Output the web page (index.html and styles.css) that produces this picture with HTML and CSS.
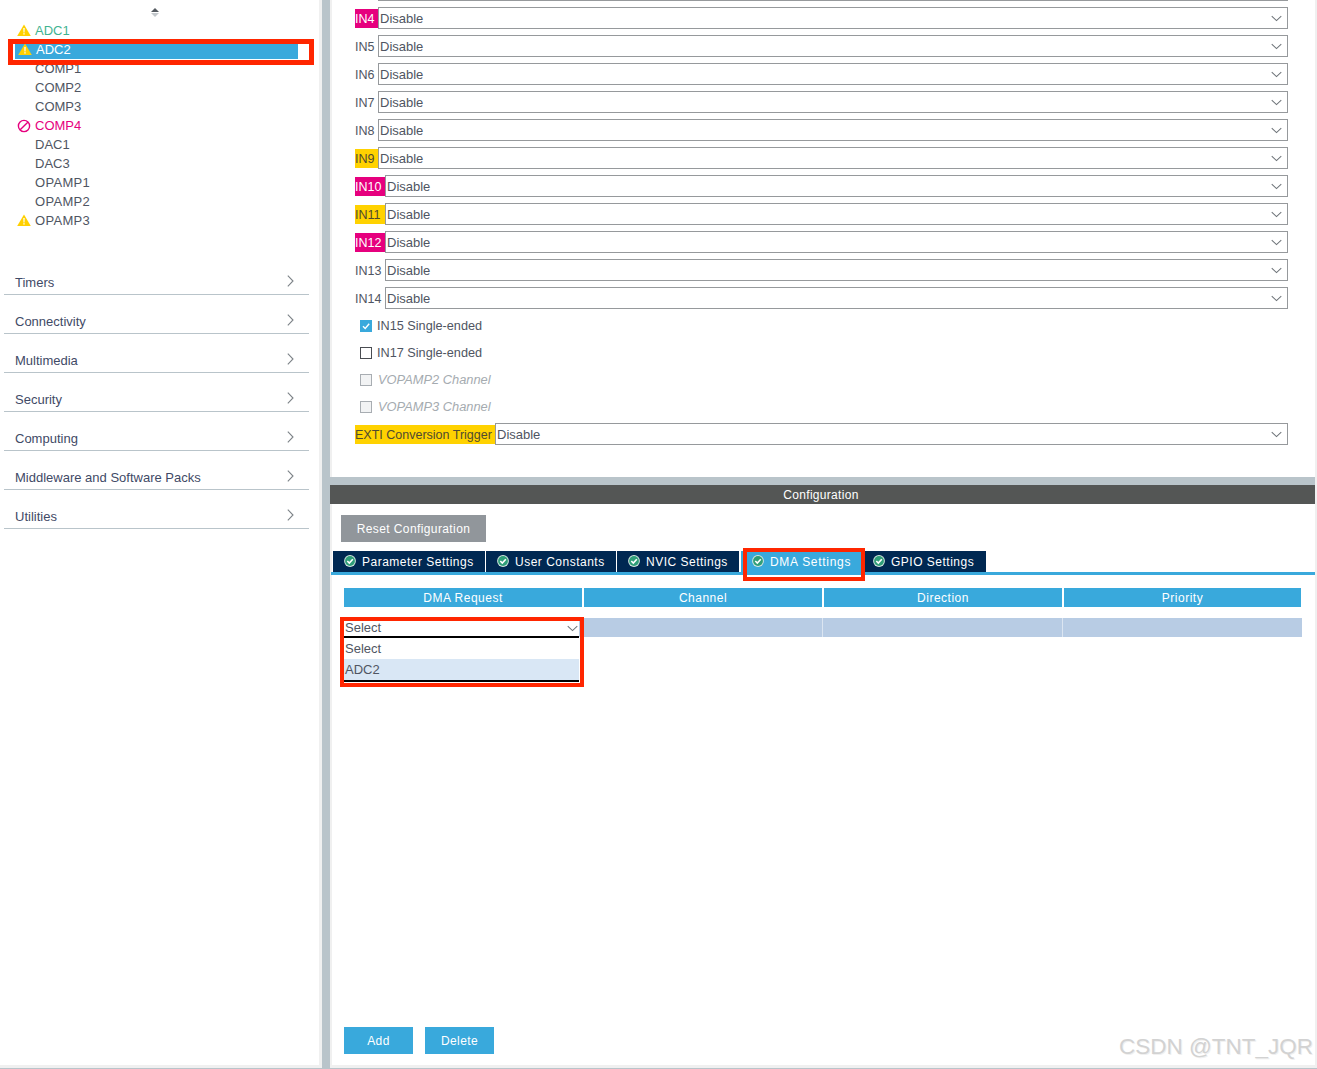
FILE: index.html
```html
<!DOCTYPE html>
<html lang="en">
<head>
<meta charset="utf-8">
<title>ADC2 DMA Settings</title>
<link rel="stylesheet" href="styles.css">
</head>
<body>
<svg class="defs" width="0" height="0" aria-hidden="true">
  <symbol id="warn" viewBox="0 0 14 12"><path d="M7 .5 13.8 12H.2Z" fill="#ffd000"/><path d="M6.3 4h1.4l-.2 4.4h-1zM6.3 9.2h1.4v1.3H6.3z" fill="#fff"/></symbol>
  <symbol id="ban" viewBox="0 0 14 14"><circle cx="7" cy="7" r="5.6" fill="none" stroke="#e6007e" stroke-width="1.4"/><path d="M3.2 10.8 10.8 3.2" stroke="#e6007e" stroke-width="1.4"/></symbol>
  <symbol id="ok" viewBox="0 0 12 12"><circle cx="6" cy="6" r="5.9" fill="#d5e8e0"/><circle cx="6" cy="6" r="4.9" fill="#2f9e78"/><path d="M3.3 6 5.3 8 8.8 4.2" fill="none" stroke="#fff" stroke-width="1.6"/></symbol>
  <symbol id="down" viewBox="0 0 12 7"><path d="M.8.8 6 5.8 11.2.8" fill="none" stroke="#6d7378" stroke-width="1.1"/></symbol>
  <symbol id="right" viewBox="0 0 7 12"><path d="M.8.6 6 6 .8 11.4" fill="none" stroke="#7d8388" stroke-width="1.1"/></symbol>
</svg>
<div class="app">
  <aside class="sidebar">
    <div class="sort"><span class="sort-up"></span><span class="sort-down"></span></div>
    <ul class="tree">
      <li class="item green"><svg class="ico"><use href="#warn"/></svg>ADC1</li>
      <li class="item selected"><span class="sel-bar"><svg class="ico"><use href="#warn"/></svg>ADC2</span></li>
      <li class="item">COMP1</li>
      <li class="item">COMP2</li>
      <li class="item">COMP3</li>
      <li class="item pink"><svg class="ico ico-ban"><use href="#ban"/></svg>COMP4</li>
      <li class="item">DAC1</li>
      <li class="item">DAC3</li>
      <li class="item wide">OPAMP1</li>
      <li class="item wide">OPAMP2</li>
      <li class="item wide"><svg class="ico"><use href="#warn"/></svg>OPAMP3</li>
    </ul>
    <nav class="accordion">
      <div class="acc">Timers<svg class="chev"><use href="#right"/></svg></div>
      <div class="acc">Connectivity<svg class="chev"><use href="#right"/></svg></div>
      <div class="acc">Multimedia<svg class="chev"><use href="#right"/></svg></div>
      <div class="acc">Security<svg class="chev"><use href="#right"/></svg></div>
      <div class="acc">Computing<svg class="chev"><use href="#right"/></svg></div>
      <div class="acc">Middleware and Software Packs<svg class="chev"><use href="#right"/></svg></div>
      <div class="acc">Utilities<svg class="chev"><use href="#right"/></svg></div>
    </nav>
    <div class="mark mark-adc"></div>
  </aside>
  <div class="splitter"></div>
  <main class="main">
    <section class="modes">
      <div class="row row-clipped"><span class="lab w1"></span><div class="sel"><svg class="caret"><use href="#down"/></svg></div></div>
      <div class="row"><span class="lab w1 bad">IN4</span><div class="sel">Disable<svg class="caret"><use href="#down"/></svg></div></div>
      <div class="row"><span class="lab w1">IN5</span><div class="sel">Disable<svg class="caret"><use href="#down"/></svg></div></div>
      <div class="row"><span class="lab w1">IN6</span><div class="sel">Disable<svg class="caret"><use href="#down"/></svg></div></div>
      <div class="row"><span class="lab w1">IN7</span><div class="sel">Disable<svg class="caret"><use href="#down"/></svg></div></div>
      <div class="row"><span class="lab w1">IN8</span><div class="sel">Disable<svg class="caret"><use href="#down"/></svg></div></div>
      <div class="row"><span class="lab w1 warn">IN9</span><div class="sel">Disable<svg class="caret"><use href="#down"/></svg></div></div>
      <div class="row"><span class="lab w2 bad">IN10</span><div class="sel">Disable<svg class="caret"><use href="#down"/></svg></div></div>
      <div class="row"><span class="lab w2 warn">IN11</span><div class="sel">Disable<svg class="caret"><use href="#down"/></svg></div></div>
      <div class="row"><span class="lab w2 bad">IN12</span><div class="sel">Disable<svg class="caret"><use href="#down"/></svg></div></div>
      <div class="row"><span class="lab w2">IN13</span><div class="sel">Disable<svg class="caret"><use href="#down"/></svg></div></div>
      <div class="row"><span class="lab w2">IN14</span><div class="sel">Disable<svg class="caret"><use href="#down"/></svg></div></div>
      <div class="checks">
        <label class="check"><span class="box on"><svg viewBox="0 0 12 12"><path d="M3 6.2 5.2 8.4 9.2 3.8" fill="none" stroke="#fff" stroke-width="1.4"/></svg></span>IN15 Single-ended</label>
        <label class="check"><span class="box"></span>IN17 Single-ended</label>
        <label class="check off"><span class="box"></span>VOPAMP2 Channel</label>
        <label class="check off"><span class="box"></span>VOPAMP3 Channel</label>
      </div>
      <div class="row"><span class="lab w3 warn">EXTI Conversion Trigger</span><div class="sel">Disable<svg class="caret"><use href="#down"/></svg></div></div>
    </section>
    <div class="hsplit"></div>
    <section class="config">
      <h2 class="config-title">Configuration</h2>
      <div class="config-body">
        <button class="btn btn-grey" type="button">Reset Configuration</button>
        <div class="tabs">
          <div class="tab t1"><svg class="ok"><use href="#ok"/></svg>Parameter Settings</div>
          <div class="tab t2"><svg class="ok"><use href="#ok"/></svg>User Constants</div>
          <div class="tab t3"><svg class="ok"><use href="#ok"/></svg>NVIC Settings</div>
          <div class="tab t4 active"><svg class="ok"><use href="#ok"/></svg>DMA Settings</div>
          <div class="tab t5"><svg class="ok"><use href="#ok"/></svg>GPIO Settings</div>
          <div class="mark mark-tab"></div>
        </div>
        <div class="table">
          <div class="th">DMA Request</div><div class="th">Channel</div><div class="th">Direction</div><div class="th">Priority</div>
        </div>
        <div class="table tr">
          <div class="td td-sel">Select<svg class="caret"><use href="#down"/></svg>
            <div class="drop"><div class="opt">Select</div><div class="opt opt-hi">ADC2</div></div>
            <div class="mark mark-drop"></div>
          </div>
          <div class="td td-div"></div><div class="td td-div"></div><div class="td"></div>
        </div>
        <div class="actions">
          <button class="btn btn-blue" type="button">Add</button>
          <button class="btn btn-blue" type="button">Delete</button>
        </div>
      </div>
    </section>
    <div class="watermark">CSDN @TNT_JQR</div>
  </main>
</div>
</body>
</html>
```

FILE: styles.css
```css
* { box-sizing: border-box; }
html, body { margin: 0; height: 100%; }
body { font-family: "Liberation Sans", Arial, sans-serif; font-size: 13px; color: #4f5562; background: #b9c4ca; overflow: hidden; }
.defs { position: absolute; }
.app { display: flex; height: 1068px; width: 1317px; background: #f0f0f0; }

.sidebar { width: 319px; height: 1065px; flex: none; background: #fff; position: relative; }
.sort { display: flex; flex-direction: column; align-items: center; gap: 1px; width: 10px; margin-left: 150px; padding-top: 8px; height: 21px; }
.sort-up { width: 0; height: 0; border: 4px solid transparent; border-top: 0; border-bottom: 4px solid #555a60; }
.sort-down { width: 0; height: 0; border: 4px solid transparent; border-bottom: 0; border-top: 4px solid #c3c8cc; }
.tree { list-style: none; margin: 0; padding: 0; }
.item { height: 19px; line-height: 19px; padding-left: 35px; position: relative; white-space: nowrap; }
.wide { letter-spacing: .3px; }
.green { color: #3fb391; }
.pink { color: #e6007e; }
.ico { position: absolute; left: 17px; top: 3px; width: 14px; height: 12px; }
.ico-ban { top: 3px; height: 14px; }
.selected { padding: 4px 0 0 15px; }
.sel-bar { display: block; position: relative; width: 283px; height: 15px; line-height: 11px; background: #39a9dc; color: #fff; padding-left: 21px; }
.sel-bar .ico { left: 3px; top: -1px; }

.accordion { margin: 26px 10px 0 4px; }
.acc { height: 39px; padding: 17px 0 0 11px; line-height: 20px; color: #3f4a66; border-bottom: 1px solid #b9c4ca; position: relative; }
.chev { position: absolute; right: 15px; top: 19px; width: 7px; height: 12px; }

.splitter { width: 11px; flex: none; background: linear-gradient(to right, #f0f0f0 3px, #b9c4ca 3px); }

.main { width: 985px; flex: none; display: flex; flex-direction: column; background: #fff; height: 1065px; position: relative; box-shadow: inset 2px 0 0 #f0f0f0; }
.modes { height: 477px; flex: none; overflow: hidden; padding: 0 27px 0 25px; display: flex; flex-direction: column; gap: 6px; }
.row { display: flex; height: 22px; flex: none; }
.row-clipped { margin-top: -21px; }
.lab { flex: none; height: 19px; line-height: 20px; margin-top: 2px; white-space: nowrap; font-size: 12.5px; }
.w1 { width: 23px; }
.w2 { width: 30px; }
.w3 { width: 140px; }
.bad { background: #e6007e; color: #fff; }
.warn { background: #ffd200; color: #4f4a30; }
.sel { flex: 1; position: relative; height: 22px; border: 1px solid #96999c; line-height: 21px; padding-left: 1px; background: #fff; }
.caret { position: absolute; right: 5px; top: 7px; width: 11px; height: 7px; }

.checks { margin: -3px 0; display: flex; flex-direction: column; }
.check { height: 27px; display: flex; align-items: center; padding-left: 5px; font-size: 12.7px; }
.box { width: 12px; height: 12px; border: 1px solid #4a4d52; background: #fff; margin-right: 5px; flex: none; display: block; }
.box svg { display: block; width: 12px; height: 12px; margin: -1px; }
.box.on { background: #39a9dc; border-color: #39a9dc; }
.off { color: #a5abb0; font-style: italic; font-size: 12.85px; }
.off .box { border-color: #a8adb2; background: #f2f3f4; margin-right: 6px; }

.hsplit { height: 8px; flex: none; background: #b9c4ca; }
.config { flex: 1; display: flex; flex-direction: column; min-height: 0; }
.config-title { margin: 0; height: 19px; line-height: 20px; background: #545655; color: #fff; font-size: 12px; letter-spacing: .3px; font-weight: 400; text-align: center; flex: none; padding-right: 3px; }
.config-body { flex: 1; display: flex; flex-direction: column; padding-top: 11px; min-height: 0; }
.btn { border: 0; color: #fff; font: 12px "Liberation Sans", Arial, sans-serif; letter-spacing: .4px; height: 27px; padding: 0; }
.btn-grey { background: #91969b; width: 145px; margin-left: 11px; flex: none; }
.btn-blue { background: #39a9dc; width: 69px; }
.tabs { display: flex; margin: 9px 0 0 1px; padding-left: 2px; height: 24px; flex: none; border-bottom: 3px solid #39a9dc; position: relative; }
.tab { height: 21px; background: #002852; color: #fff; font-size: 12px; letter-spacing: .5px; line-height: 20px; display: flex; align-items: center; flex: none; padding: 1px 0 0 11px; white-space: nowrap; }
.ok { width: 12px; height: 12px; margin: -2px 6px 0 0; flex: none; }
.t1 { width: 152px; }
.t2 { width: 130px; margin-left: 1px; }
.t3 { width: 122px; margin-left: 1px; }
.t4 { width: 121px; margin-left: 2px; letter-spacing: .7px; }
.t5 { width: 124px; }
.active { background: #39a9dc; }

.table { display: grid; grid-template-columns: 238px 238px 238px 237px; column-gap: 2px; margin-left: 14px; width: 957px; flex: none; }
.th { height: 19px; line-height: 20px; background: #39a9dc; color: #fff; text-align: center; font-size: 12px; letter-spacing: .5px; margin-top: 13px; }
.tr { margin-top: 11px; background: #b8cce4; height: 19px; width: 958px; }
.td { height: 19px; position: relative; }
.td-div { box-shadow: 1px 0 0 #dbe5f1; }
.td-sel { background: #fff; line-height: 19px; padding-left: 1px; border-bottom: 2px solid #000; height: 20px; width: 235px; }
.td-sel .caret { right: 1px; top: 7px; }
.drop { position: absolute; left: 0; right: 0; top: 20px; background: #fff; border-bottom: 2px solid #000; z-index: 2; }
.opt { height: 21px; line-height: 21px; padding-left: 1px; }
.opt-hi { background: #d9e7f5; }
.actions { margin-top: auto; display: flex; gap: 12px; padding: 0 0 11px 14px; }

.mark { position: absolute; border: 4px solid #ff2600; pointer-events: none; z-index: 3; }
.mark-adc { left: 8px; top: 39px; width: 306px; height: 26px; border-width: 5px; }
.mark-tab { left: 412px; top: -3px; width: 122px; height: 33px; }
.mark-drop { left: -4px; top: -1px; width: 244px; height: 70px; }
.watermark { position: absolute; right: 2px; bottom: 5px; font-size: 22.5px; color: #d2d2d2; text-shadow: 1px 1px 0 #f0f0f0; white-space: nowrap; }
```
